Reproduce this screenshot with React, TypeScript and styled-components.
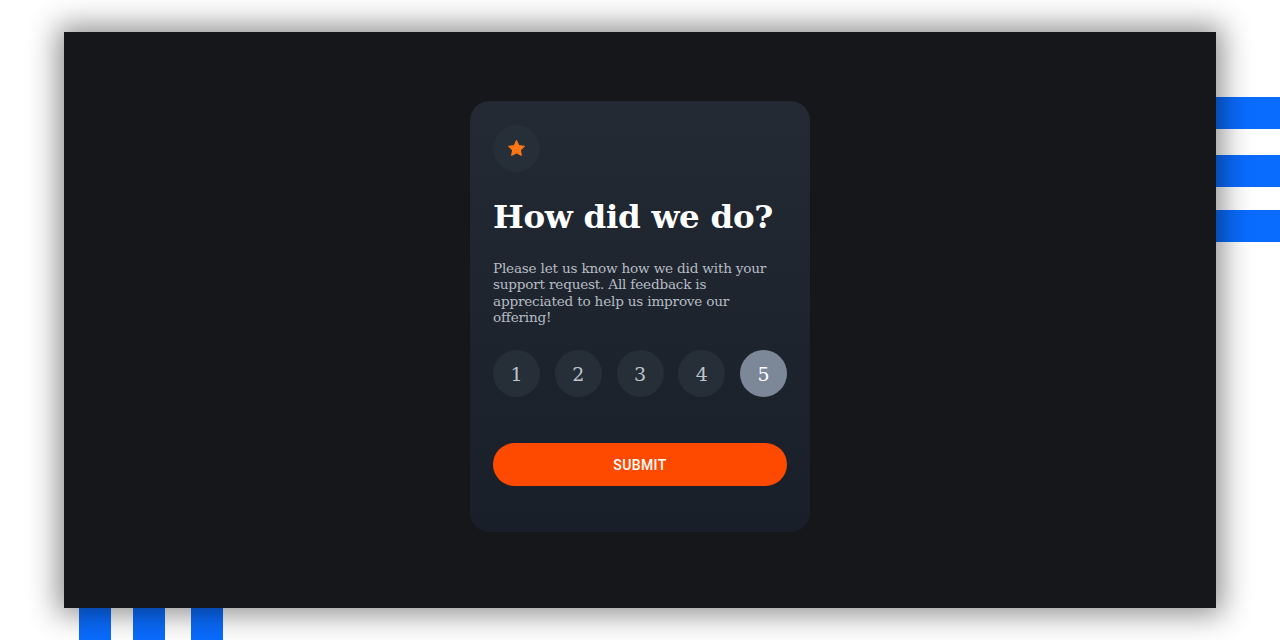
import React, { useState } from "react";
import styled, { createGlobalStyle } from "styled-components";

const GlobalStyle = createGlobalStyle`
  * { box-sizing: border-box; }
  body {
    margin: 0;
    background: #ffffff;
    font-family: "DejaVu Serif", serif;
  }
`;

const Page = styled.div`
  position: relative;
  width: 1280px;
  height: 640px;
  overflow: hidden;
  padding: 32px 64px;
`;

const StripeH = styled.div<{ $top: number }>`
  position: absolute;
  right: 0;
  top: ${(p) => p.$top}px;
  width: 200px;
  height: 32px;
  background: #0a6cff;
`;

const StripeV = styled.div<{ $left: number }>`
  position: absolute;
  bottom: 0;
  left: ${(p) => p.$left}px;
  width: 32px;
  height: 200px;
  background: #0a6cff;
`;

const Frame = styled.main`
  position: relative;
  z-index: 1;
  width: 1152px;
  height: 576px;
  background: #16171b;
  box-shadow: 0 0 28px 6px rgba(0, 0, 0, 0.45);
  display: flex;
  align-items: center;
  justify-content: center;
  padding-bottom: 7px;
`;

const Card = styled.section`
  width: 340px;
  height: 431px;
  border-radius: 20px;
  background: linear-gradient(180deg, #232a34 0%, #181f29 100%);
  padding: 24px 23px;
  display: flex;
  flex-direction: column;
`;

const IconCircle = styled.div`
  width: 47px;
  height: 47px;
  border-radius: 50%;
  background: #262e38;
  display: flex;
  align-items: center;
  justify-content: center;
`;

const Title = styled.h1`
  margin: 25px 0 0;
  font-family: "DejaVu Serif", serif;
  font-weight: 700;
  font-size: 32.5px;
  line-height: 40px;
  color: #ffffff;
  letter-spacing: -0.3px;
`;

const Text = styled.p`
  margin: 23px 0 0;
  max-width: 282px;
  font-family: "DejaVu Serif", serif;
  font-size: 13.6px;
  line-height: 16.3px;
  color: #b7bcc4;
  letter-spacing: -0.2px;
`;

const Ratings = styled.div`
  margin-top: 25px;
  display: flex;
  justify-content: space-between;
`;

const Rate = styled.button<{ $active: boolean }>`
  width: 47px;
  height: 47px;
  border-radius: 50%;
  border: none;
  padding: 0;
  font-family: "DejaVu Serif", serif;
  font-size: 19px;
  color: ${(p) => (p.$active ? "#ffffff" : "#bfc4cb")};
  background: ${(p) => (p.$active ? "#7c8798" : "#262e38")};
  cursor: pointer;
`;

const Submit = styled.button`
  margin-top: 46px;
  height: 43px;
  border: none;
  border-radius: 22px;
  background: #fe4a01;
  color: #ffffff;
  font-family: Roboto, "Liberation Sans", sans-serif;
  font-size: 14px;
  font-weight: 500;
  letter-spacing: 0.4px;
  cursor: pointer;
`;

function Star() {
  return (
    <svg width="19" height="19" viewBox="0 0 24 24">
      <path
        d="M12 2.2l2.9 6.2 6.8.8-5 4.6 1.3 6.7L12 17.2l-6 3.3 1.3-6.7-5-4.6 6.8-.8z"
        fill="#fc7614"
        stroke="#fc7614"
        strokeWidth="1.6"
        strokeLinejoin="round"
      />
    </svg>
  );
}

export default function App() {
  const [rating, setRating] = useState(5);
  return (
    <>
      <GlobalStyle />
      <Page>
        <StripeH $top={97} />
        <StripeH $top={155} />
        <StripeH $top={210} />
        <StripeV $left={79} />
        <StripeV $left={133} />
        <StripeV $left={191} />
        <Frame>
          <Card>
            <IconCircle>
              <Star />
            </IconCircle>
            <Title>How did we do?</Title>
            <Text>
              Please let us know how we did with your support request. All
              feedback is appreciated to help us improve our offering!
            </Text>
            <Ratings>
              {[1, 2, 3, 4, 5].map((n) => (
                <Rate key={n} $active={rating === n} onClick={() => setRating(n)}>
                  {n}
                </Rate>
              ))}
            </Ratings>
            <Submit>SUBMIT</Submit>
          </Card>
        </Frame>
      </Page>
    </>
  );
}
